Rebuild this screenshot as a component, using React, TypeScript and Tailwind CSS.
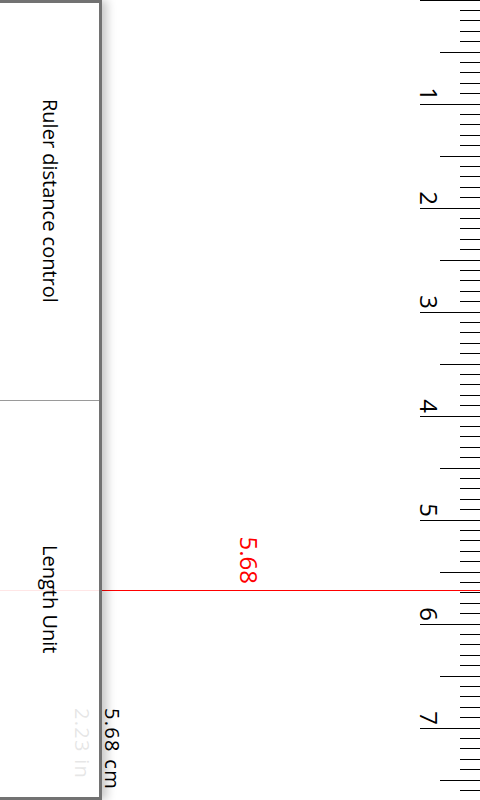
import React from 'react';

const MM = 10.4;
const TICKS = Array.from({ length: 78 }, (_, i) => i);

function Ruler() {
  const readY = 5.68 * 10 * MM;
  return (
    <svg
      className="absolute inset-0"
      width={480}
      height={800}
      viewBox="0 0 480 800"
      shapeRendering="crispEdges"
    >
      {/* tick marks, one per millimetre */}
      {TICKS.map((i) => {
        const y = Math.floor(i * MM) + 0.5;
        const x1 = i % 10 === 0 ? 420 : i % 5 === 0 ? 440 : 460;
        return <line key={i} x1={x1} x2={480} y1={y} y2={y} stroke="#000" strokeWidth={1} />;
      })}

      {/* centimetre labels */}
      {[1, 2, 3, 4, 5, 6, 7].map((n) => (
        <text
          key={n}
          transform={`translate(420 ${Math.floor(n * 10 * MM) - 3}) rotate(90)`}
          textAnchor="end"
          fontFamily="'Open Sans', sans-serif"
          fontSize={24}
          fill="#000"
        >
          {n}
        </text>
      ))}

      {/* measurement line */}
      <line x1={0} x2={480} y1={Math.floor(readY) + 0.5} y2={Math.floor(readY) + 0.5} stroke="#ff0000" strokeWidth={1} />
      <text
        transform={`translate(240 ${Math.floor(readY) - 6}) rotate(90)`}
        textAnchor="end"
        fontFamily="'Open Sans', sans-serif"
        fontSize={24}
        fill="#ff0000"
      >
        5.68
      </text>

      {/* readout */}
      <text
        transform="translate(105 708) rotate(90)"
        fontFamily="'Open Sans', sans-serif"
        fontSize={20}
        letterSpacing={1.3}
        fill="#000"
      >
        5.68 cm
      </text>
      <text
        transform="translate(75 708) rotate(90)"
        fontFamily="'Open Sans', sans-serif"
        fontSize={20}
        letterSpacing={1.3}
        fill="#000"
      >
        2.23 in
      </text>
    </svg>
  );
}

export default function App() {
  return (
    <div
      className="relative w-[480px] h-[800px] overflow-hidden bg-white"
      style={{ fontFamily: "'Open Sans', 'Noto Sans', sans-serif" }}
    >
      <Ruler />

      {/* side panel */}
      <div className="relative z-10 flex h-full w-[102px] flex-col border-y-[3px] border-r-[3px] border-[#727272] bg-white/90 shadow-[5px_0_9px_rgba(0,0,0,0.22)]">
        <div className="flex flex-1 items-center justify-center border-b border-[#9a9a9a]">
          <span className="text-[20px] leading-none text-black [writing-mode:vertical-rl]">
            Ruler distance control
          </span>
        </div>
        <div className="flex flex-1 items-center justify-center">
          <span className="text-[20px] leading-none text-black [writing-mode:vertical-rl]">
            Length Unit
          </span>
        </div>
      </div>
    </div>
  );
}
